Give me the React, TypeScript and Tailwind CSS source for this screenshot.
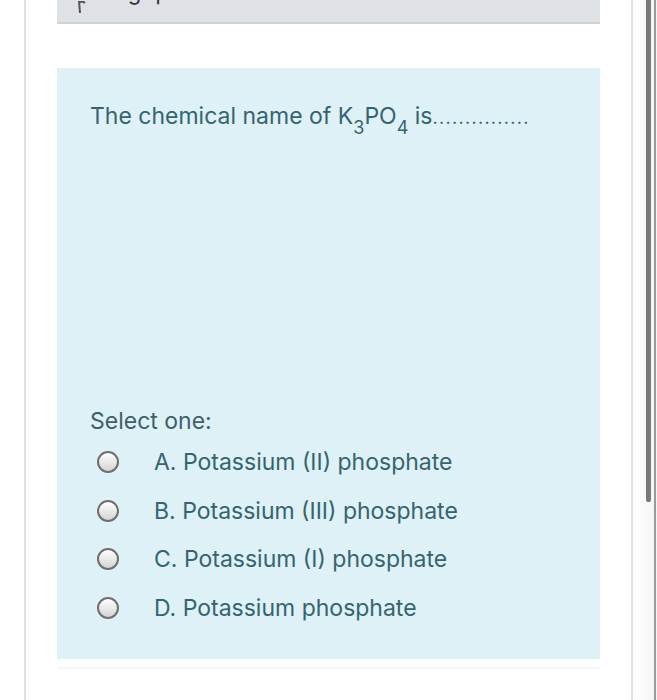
import React from "react";

const options = [
  "A. Potassium (II) phosphate",
  "B. Potassium (III) phosphate",
  "C. Potassium (I) phosphate",
  "D. Potassium phosphate",
];

function Radio() {
  return (
    <div className="w-[22px] h-[22px] rounded-full border-[2px] border-[#6f6f6f] bg-gradient-to-b from-[#ffffff] to-[#d4d4d4] shrink-0" />
  );
}

export default function App() {
  return (
    <div
      className="w-[657px] h-[700px] bg-white overflow-hidden flex"
      style={{ fontFamily: 'Inter, "Liberation Sans", Arial, sans-serif' }}
    >
      <div className="w-[24px] shrink-0" />
      <div className="w-[609px] h-full border-l-2 border-r-2 border-[#e2e2e2] px-[31px] flex flex-col shrink-0">
        <div className="-mt-[20px] h-[44px] bg-[#dee2e6] border-b-2 border-[#cfd3d7] flex items-end pl-[20px] pb-[19px] gap-[10px] text-[22px] text-[#333] leading-none">
          <svg width="10" height="14" viewBox="0 0 10 14" className="mb-[-12px]">
            <path d="M2 0 L3 12" stroke="#555" strokeWidth="2" fill="none" />
            <path d="M3 1 Q6 0 8 2" stroke="#555" strokeWidth="2" fill="none" />
          </svg>
          <span>Flag question</span>
        </div>
        <div className="mt-[44px] h-[591px] bg-[#ddf1f7] pl-[33px] pt-[34px] text-[#35646f]">
          <div className="text-[23px] leading-[28px]">
            The chemical name of K<sub className="text-[18px] align-[-5px]">3</sub>PO<sub className="text-[18px] align-[-5px]">4</sub> is<span className="text-[18px] tracking-[1.3px]">...............</span>
          </div>
          <div className="mt-[275px] text-[23px] leading-[28px] text-[#3f6069]">Select one:</div>
          <div className="mt-[13px] flex flex-col gap-[20.5px]">
            {options.map((o) => (
              <div key={o} className="flex items-center h-[28px]">
                <div className="ml-[7px] mr-[35px]">
                  <Radio />
                </div>
                <span className="text-[23px] leading-[28px]">{o}</span>
              </div>
            ))}
          </div>
        </div>
        <div className="h-[2px] mt-[8px] bg-[#f6f6f6]" />
      </div>
      <div className="flex-1 relative bg-gradient-to-r from-white to-[#f4f4f4]">
        <div className="absolute left-[13px] top-0 w-[5px] h-[502px] bg-[#7a7a7a] rounded-b-[2px]" />
        <div className="absolute right-[1px] top-0 w-[2px] h-full bg-[#9a9a9a]" />
      </div>
    </div>
  );
}
